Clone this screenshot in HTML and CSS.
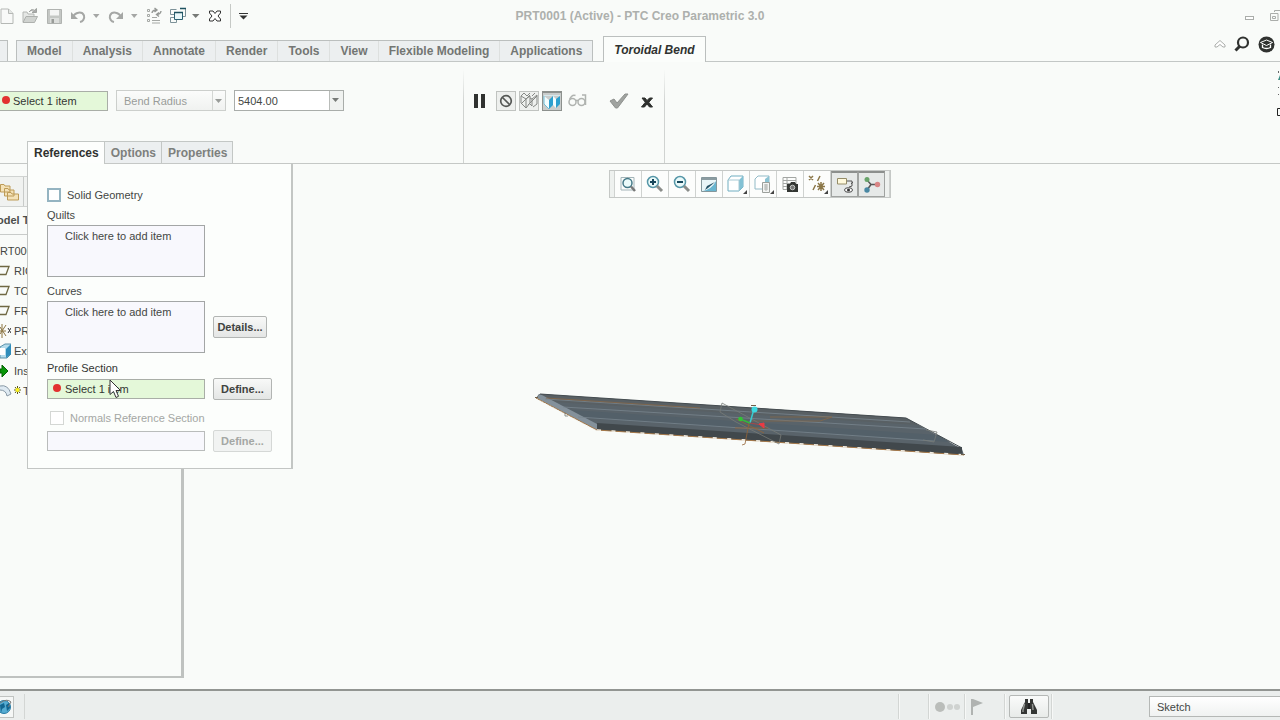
FILE: index.html
```html
<!DOCTYPE html>
<html lang="en">
<head>
<meta charset="utf-8">
<title>PRT0001 (Active) - PTC Creo Parametric 3.0</title>
<link rel="stylesheet" href="styles.css">
</head>
<body>
<header class="titlebar">
  <div class="quick">
    <button class="ico" aria-label="New"><svg width="14" height="18" viewBox="0 0 14 18"><path d="M1 2H8.500L13 6.500V16.500H1z" fill="#f8f9f8" stroke="#b5b8b5"/><path d="M8.500 2V6.500H13" fill="#e4e6e4" stroke="#b5b8b5"/></svg></button>
    <button class="ico" aria-label="Open"><svg width="16" height="18" viewBox="0 0 16 18"><path d="M1 15V5H5L6 7H12V9" fill="#e5e7e5" stroke="#b4b7b4"/><path d="M1 15.500L4 9.500H15.500L12.500 15.500z" fill="#d0d3d0" stroke="#aeb1ae"/><path d="M7 5Q9 1.500 12 3M10 5.500H14.500V1.500z" fill="#aaa" stroke="#a0a3a0"/></svg></button>
    <button class="ico" aria-label="Save"><svg width="16" height="18" viewBox="0 0 16 18"><path d="M1.500 2.500H15.500V16.500H1.500z" fill="#c4c7c4" stroke="#b0b3b0"/><path d="M4 3H13V8.500H4z" fill="#f4f5f4"/><path d="M4 11H13V16H4z" fill="#dcdedc"/><path d="M5.500 12H8V16H5.500z" fill="#999c99"/></svg></button>
    <span class="pair"><button class="ico" aria-label="Undo"><svg width="16" height="18" viewBox="0 0 16 18"><path d="M3 10C5 5 12 4 14 8.500C15 12 12.500 14.500 10 15" fill="none" stroke="#a5a7a5" stroke-width="2"/><path d="M1 5V12H8z" fill="#a5a7a5"/></svg></button><button class="ico" aria-label="Undo list"><svg width="8" height="6"><path d="M1 1H7.500L4.200 5z" fill="#a5a7a5"/></svg></button></span>
    <span class="pair"><button class="ico" aria-label="Redo"><svg width="16" height="18" viewBox="0 0 16 18"><path d="M13 10C11 5 4 4 2 8.500C1 12 3.500 14.500 6 15" fill="none" stroke="#a5a7a5" stroke-width="2"/><path d="M15 5V12H8z" fill="#a5a7a5"/></svg></button><button class="ico" aria-label="Redo list"><svg width="8" height="6"><path d="M1 1H7.500L4.200 5z" fill="#a5a7a5"/></svg></button></span>
    <button class="ico" aria-label="Regenerate"><svg width="16" height="18" viewBox="0 0 16 18" fill="none" stroke="#a5a8a5"><path d="M1.500 2.500h2v2h-2zM1.500 7.500h2v2h-2zM1.500 12.500h2v2h-2zM6 10.500H11M6 13.500H14M6 16H14"/><path d="M6 6Q6.500 3 10 3M8.500 1L11 3L8.500 5M15 4Q14.500 7.500 11 7.500M13 5.500L10.500 7.500L13 9.500" stroke="#959895" stroke-width="1.400"/></svg></button>
    <span class="pair"><button class="ico" aria-label="Windows"><svg width="16" height="18" viewBox="0 0 16 18" fill="none"><path d="M6.500 2.500H.500V7.500H4M4 10.500H.500V15.500H6.500V13M10 1.500H15.500V9.500H13" stroke="#7d9299"/><path d="M4.500 5.500H12.500V12.500H4.500z" stroke="#2b6070" fill="#e8f7f9"/><path d="M4 5.500H13M10 1.500H16" stroke="#1e5260" stroke-width="1.500"/></svg></button><button class="ico" aria-label="Windows list"><svg width="8" height="6"><path d="M0 1H7.500L3.700 5z" fill="#777a77"/></svg></button></span>
    <button class="ico" aria-label="Close window"><svg width="14" height="18" viewBox="0 0 14 18"><path d="M1.500 4H5L7 6.500L9 4H12.500V6L10 9L12.500 12V14H9L7 11.500L5 14H1.500V12L4 9L1.500 6z" fill="#fff" stroke="#333"/></svg></button>
    <span class="quick-sep"></span>
    <button class="ico" aria-label="Customize toolbar"><svg width="9" height="9"><path d="M0 1H9V2H0zM0.500 3.500H8.500L4.500 7.500z" fill="#333"/></svg></button>
  </div>
  <h1 class="title">PRT0001 (Active) - PTC Creo Parametric 3.0</h1>
  <div class="window-buttons">
    <button class="ico" aria-label="Minimize"><svg width="10" height="18"><rect x=".5" y="9.500" width="8" height="3" fill="#fff" stroke="#aaadaa"/></svg></button>
    <button class="ico" aria-label="Restore"><svg width="10" height="18" fill="none" stroke="#aaadaa"><path d="M4.500 5V3.500H10M.500 6.500H8V13.500H.500zM2.500 9.500H5.500V11.500H2.500z"/></svg></button>
  </div>
</header>

<nav class="tabs">
  <span class="file-tab"></span>
  <div class="tab-group">
    <button>Model</button><button>Analysis</button><button>Annotate</button><button>Render</button><button>Tools</button><button>View</button><button>Flexible Modeling</button><button>Applications</button>
  </div>
  <button class="active-tab">Toroidal Bend</button>
  <div class="help">
    <button class="ico" aria-label="Collapse ribbon"><svg width="12" height="9"><path d="M1 5L6 0.500L11 5V7H9L6 4.500L3 7H1z" fill="#fff" stroke="#aaadaa"/></svg></button>
    <button class="ico" aria-label="Search"><svg width="16" height="16" fill="none" stroke="#303230"><circle cx="9" cy="6.500" r="5" stroke-width="2.200"/><path d="M6 10L1.500 14.500" stroke-width="3"/></svg></button>
    <button class="ico" aria-label="Help"><svg width="17" height="17"><circle cx="8.500" cy="8.500" r="8" fill="#303230"/><path d="M2.500 6.500L8.500 4L14.500 6.500L8.500 9.500z" fill="#303230" stroke="#fff"/><path d="M4.500 8.500V11.500Q8.500 13.500 12.500 11.500V8.500" fill="none" stroke="#fff" stroke-width="1.300"/></svg></button>
  </div>
</nav>

<section class="ribbon">
  <div class="settings">
    <div class="controls">
      <label class="picker"><i class="dot"></i><input aria-label="Profile section" value="Select 1 item" readonly></label>
      <label class="drop bend"><select aria-label="Bend type" disabled><option>Bend Radius</option></select><svg class="caret" width="8" height="5"><path d="M0 0H7L3.500 4z" fill="#999c99"/></svg></label>
      <div class="combo"><input aria-label="Radius" value="5404.00"><button aria-label="Recent values"><svg width="8" height="5"><path d="M0 0H7L3.500 4z" fill="#777a77"/></svg></button></div>
    </div>
    <div class="subtabs">
      <button class="current">References</button><button>Options</button><button>Properties</button>
      <form class="panel">
        <label class="check"><input type="checkbox"> Solid Geometry</label>
        <div class="field"><label for="quilts">Quilts</label><div class="line"><textarea id="quilts" readonly>Click here to add item</textarea></div></div>
        <div class="field"><label for="curves">Curves</label><div class="line"><textarea id="curves" readonly>Click here to add item</textarea><button type="button" class="push details">Details...</button></div></div>
        <div class="field profile"><label for="profile">Profile Section</label><div class="line"><span class="picker"><i class="dot"></i><input id="profile" value="Select 1 item" readonly></span><button type="button" class="push">Define...</button></div></div>
        <label class="check normals"><input type="checkbox" disabled> Normals Reference Section</label>
        <div class="line"><input class="blank" aria-label="Normals reference" disabled><button type="button" class="push" disabled>Define...</button></div>
        <svg class="pointer" width="14" height="21"><path d="M1 1V15.500L4.500 12.500L7 18.500L9.500 17.300L7 11.500H11.500z" fill="#fff" stroke="#333"/></svg>
      </form>
    </div>
  </div>
  <div class="actions">
    <button class="ico" aria-label="Pause"><svg width="14" height="20"><path d="M1 3H5V17H1zM8 3H12V17H8z" fill="#303230"/></svg></button>
    <div class="modes">
      <button class="mode" aria-label="No preview"><svg width="18" height="18" fill="none" stroke="#555855" stroke-width="1.700"><circle cx="9" cy="9" r="5.300"/><path d="M5.500 5.500L12.500 12.500"/></svg></button>
      <button class="mode" aria-label="Unattached preview"><svg width="18" height="18" fill="none" stroke="#858885"><path d="M1 4L6 7V16L1 11zM6 7L10 4V11L6 16M10 6L12 7V14L10 12M12 7L17 3V12L13 15M1 4L4 1L7 4L10 1M12 4L15 1M1 12L10 3M8 13L17 4"/></svg></button>
      <button class="mode on" aria-label="Attached preview"><svg width="18" height="17"><path d="M1 3L6 7V16L1 11zM10 3L13 6V15L10 12z" fill="#f2fdff"/><path d="M6 7L10 3V12L6 16zM13 6L17 3V11L13 15z" fill="#2c9fce"/><path d="M1 2.500H17" stroke="#d5e8ed"/><path d="M1 3V11L6 16" fill="none" stroke="#6dbdd6"/></svg></button>
      <button class="ico" aria-label="Verify"><svg width="20" height="18" fill="none" stroke="#b0b3b0" stroke-width="1.500"><circle cx="4.500" cy="10" r="3.500"/><circle cx="13.500" cy="10" r="3.500"/><path d="M8 9Q9 7.500 10 9M1.500 7.500Q4 2 7.500 3.500M17.500 13V3H14"/></svg></button>
    </div>
    <div class="finish">
      <button class="ico" aria-label="Accept"><svg width="20" height="20"><path d="M1 10L5 8L8 12L16 3H19L8.500 17H6.500z" fill="#a0a3a0" stroke="#8e918e"/></svg></button>
      <button class="ico" aria-label="Cancel"><svg width="12" height="20"><path d="M1 7H4L6 9.500L8.500 7H11.500L7.800 11.300L11.500 16H8.500L6 13L3.500 16H.500L4.300 11.300z" fill="#2e302e" stroke="#2e302e"/></svg></button>
    </div>
  </div>
  <div class="overflow"><svg width="5" height="42"><path d="M3 1h1v2h-1zM3 17h1v1h-1zM3 24h1v1h-1z" fill="#666"/><path d="M3 10L5 5V10z" fill="#3c8e85"/></svg><svg width="5" height="10"><path d="M5 1.500H2.500V8.500H5" fill="none" stroke="#222"/></svg></div>
</section>

<main class="workspace">
  <aside class="tree">
    <div class="tree-tabs"><button aria-label="Folders"><svg width="20" height="20" fill="#f4e2b8" stroke="#bd9b57"><path d="M.500 2.500H4L5 4H10V10H.500zM4.500 6.500H8L9 8H14V14H4.500zM7.500 10.500H11L12 12H18.500V18H7.500z"/></svg></button></div>
    <h2>odel T</h2>
    <ul>
      <li class="root">RT000</li>
      <li><svg width="10" height="14"><path d="M0 2.500H9L6 10.500H0" fill="none" stroke="#6f6843" stroke-width="1.300"/></svg>RIG</li>
      <li><svg width="10" height="14"><path d="M0 2.500H9L6 10.500H0" fill="none" stroke="#6f6843" stroke-width="1.300"/></svg>TO</li>
      <li><svg width="10" height="14"><path d="M0 2.500H9L6 10.500H0" fill="none" stroke="#6f6843" stroke-width="1.300"/></svg>FR</li>
      <li><svg width="12" height="16"><path d="M2 1V15M0 8H6M0 4L6 13M6 2L0 11" stroke="#8a7441" fill="none"/><path d="M8 5L11 10M11 5L8 10" stroke="#333"/></svg>PR</li>
      <li><svg width="12" height="16"><path d="M0 4L5 1H11V11L7 15H0z" fill="#b4dcec" stroke="#5a91aa"/><path d="M6 6L11 1V11L6 15z" fill="#2f8dbb"/><path d="M0 5H5V12H0z" fill="#fff"/></svg>Ext</li>
      <li><svg width="12" height="14"><path d="M0 5H2V1L8 7L2 13V9H0z" fill="#079607" stroke="#056205"/></svg>Ins</li>
      <li><svg width="23" height="16"><path d="M0 3Q8 1 11 11L7 13Q6 7 0 7" fill="#dfeaf2" stroke="#8898a5"/><path d="M14 7H21M17.500 3V11M15 4L20 10M20 4L15 10" stroke="#5e5b16"/><circle cx="17.500" cy="7" r="2" fill="#fbf31b"/></svg>T</li>
    </ul>
  </aside>
  <section class="canvas">
    <div class="view-tools">
      <span class="grip"></span>
      <button aria-label="Refit"><svg width="20" height="20" fill="none"><path d="M3 3.500H16V16H3z" stroke="#a3b4b8"/><circle cx="9.500" cy="9" r="4.500" fill="#eafafa" stroke="#447987" stroke-width="1.500"/><path d="M13 12.500L17 17" stroke="#777" stroke-width="2.500"/></svg></button>
      <button aria-label="Zoom in"><svg width="20" height="20" fill="none"><circle cx="8" cy="8" r="5.500" fill="#eafafa" stroke="#5697a8" stroke-width="1.500"/><path d="M5 8H11M8 5V11" stroke="#17475c" stroke-width="2"/><path d="M12 12L17 17" stroke="#8a8d8a" stroke-width="3"/></svg></button>
      <button aria-label="Zoom out"><svg width="20" height="20" fill="none"><circle cx="8" cy="8" r="5.500" fill="#eafafa" stroke="#5697a8" stroke-width="1.500"/><path d="M5 8H11" stroke="#17475c" stroke-width="2"/><path d="M12 12L17 17" stroke="#8a8d8a" stroke-width="3"/></svg></button>
      <button aria-label="Repaint"><svg width="20" height="20"><path d="M2.500 3.500H17.500V17.500H2.500z" fill="#e9f5f8" stroke="#85979c"/><path d="M3 6H17V4H3z" fill="#8b9ca1"/><path d="M17 7V17H4Q13 15 17 7z" fill="#68b5d0"/><path d="M16 8L9 14L6 16L8 12z" fill="#235064"/></svg></button>
      <button aria-label="Display style"><svg width="20" height="20"><path d="M2 6L5 2H17V13L13 17H2z" fill="#fff" stroke="#71aec1"/><path d="M13 6L17 2V13L13 17z" fill="#82c1d4"/><path d="M2 6H13V17" fill="none" stroke="#a8cad4"/></svg><i class="more"></i></button>
      <button aria-label="Saved orientations"><svg width="20" height="20"><path d="M2 5L5 2H16V12L13 15H2z" fill="#fff" stroke="#91bac7"/><path d="M12 5L16 2V12L12 15z" fill="#8cc4d4"/><path d="M9.500 8.500H16.500V18.500H9.500z" fill="#f4f5f4" stroke="#9ca09c"/><path d="M11 11H15M11 13H15M11 15H15M13 10V17" stroke="#b0b3b0"/></svg><i class="more"></i></button>
      <button aria-label="View manager"><svg width="20" height="20" fill="none"><path d="M3 3.500H16V15.500H3zM3 6.500H16M3 9.500H16M3 12.500H10M7 3V15" stroke="#a3a6a3"/><path d="M7 10H10L11 8H15L16 10H18V18H7z" fill="#333633"/><circle cx="12.500" cy="13.500" r="2.300" fill="#777" stroke="#c5c8c5"/></svg></button>
      <button aria-label="Datum display"><svg width="20" height="20" fill="none" stroke="#8b7748" stroke-width="1.500"><path d="M2 2L6 6M6 2L2 6M13 2L10.500 7M8.500 11L6 16M14 8V17M10 12.500H18M11 9L17 16M17 9L11 16"/></svg><i class="more"></i></button>
      <button class="on" aria-label="Annotation display"><svg width="20" height="20" fill="none"><path d="M2.500 3.500H11.500V9H2.500z" fill="#fff9dc" stroke="#948c68"/><path d="M12 6H17V11L14 12M16 9L18 7" stroke="#555"/><ellipse cx="13.500" cy="15" rx="4" ry="2.300" fill="#fff" stroke="#444"/><circle cx="13.500" cy="15" r="1.500" fill="#333"/></svg></button>
      <button class="on" aria-label="Spin center"><svg width="20" height="20"><path d="M5 5L9 9.500H15M9 9.500L5 15" fill="none" stroke="#555" stroke-width="1.500"/><circle cx="5" cy="4.500" r="2.500" fill="#68a46a"/><circle cx="15.500" cy="9.500" r="2.700" fill="#d88585"/><circle cx="5" cy="15" r="2.700" fill="#4988a3"/></svg></button>
      <span class="grip"></span>
    </div>
    <svg class="part" width="440" height="76" viewBox="530 385 440 76" role="img" aria-label="Flat plate">
      <path d="M539 394L906 418L962 449L964 455L597 430L536 398z" fill="#59636a"/>
      <path d="M539 394L906 418L918 425L553 402z" fill="#596064"/>
      <path d="M572 410L938 435L950 442L585 418z" fill="#536069"/>
      <path d="M536 398L540 394L597 424V430z" fill="#84919b"/>
      <path d="M597 423L962 447V455L597 430z" fill="#41484c"/>
      <path d="M540 394L906 418L962 448" fill="none" stroke="#454c50"/>
      <path d="M545 399L910 422M563 407L926 429M578 417L934 441" fill="none" stroke="#78858e" stroke-width=".8"/>
      <path d="M546 398L700 408M770 417H832L820 421H750" fill="none" stroke="#866748" stroke-width=".8"/>
      <path d="M536 398L597 430L964 455" fill="none" stroke="#a87a4a"/>
      <path d="M537 399L597 431" fill="none" stroke="#e8e8e0" stroke-dasharray="1 2"/>
      <path d="M597 430L964 455" fill="none" stroke="#f0ece2" stroke-width="1.600" stroke-dasharray="4 10.500"/>
      <path d="M720 412L722 403L781 435L779 444L736 422zM926 430L937 432L934 442L923 440M565 412V416H568" fill="none" stroke="#777b77" stroke-width=".8"/>
      <path d="M736 419L764 433M735 428H768M749 423L745 444L742 445" fill="none" stroke="#946437" stroke-width=".8"/>
      <path d="M750 423L754 409" stroke="#37cbd1" stroke-width="1.500"/><path d="M750 423L740 419" stroke="#35b83b" stroke-width="1.500"/><path d="M750 423L762 425" stroke="#a94747"/>
      <circle cx="754.500" cy="409.500" r="3" fill="#3dd8e0"/><circle cx="740.500" cy="419" r="2.300" fill="#32c236"/><path d="M759 424L764 423V428z" fill="#eb3a43" stroke="#eb3a43"/><path d="M751 405.500H756M535 397.500H538M961 454.500H965" stroke="#6f5e48"/>
    </svg>
  </section>
</main>

<footer class="status">
  <button class="globe" aria-label="Browser"><svg width="12" height="18"><circle cx="4" cy="9" r="6.500" fill="#56acd2" stroke="#277aa3"/><path d="M0 7L4 5L5 9L2 11L1 15M6 7L9 5L10 10L7 13z" fill="#126590"/><path d="M0 5Q7 0 11 4L8 9" fill="none" stroke="#777"/></svg></button>
  <span class="cell message"></span>
  <span class="cell slot"></span>
  <span class="cell dots"><svg width="28" height="14"><circle cx="6" cy="7" r="5" fill="#babdba"/><circle cx="16" cy="7" r="3" fill="#cfd2d0"/><circle cx="23" cy="7" r="3" fill="#cfd2d0"/></svg></span>
  <span class="cell flag"><svg width="14" height="18"><path d="M1 1H3V17H1zM3 1L13 5L3 9z" fill="#b0b3b1"/></svg></span>
  <button class="find" aria-label="Find"><svg width="18" height="17"><path d="M5 1H8V5H10V1H13V4L17 12V16H11V11H7V16H1V12L5 4z" fill="#343634"/><path d="M8 5H10V11H8z" fill="#222"/><path d="M4.500 6L3 12V14M12.500 6L13 12" stroke="#8e918e" stroke-width="1.500"/></svg></button>
  <span class="cell rest"></span>
  <select class="filter" aria-label="Selection filter"><option>Sketch</option></select>
</footer>
</body>
</html>
```
FILE: styles.css
```css
* { box-sizing: border-box; }
body {
  margin: 0;
  min-height: 100vh;
  display: flex;
  flex-direction: column;
  overflow: hidden;
  background: #f9fbf9;
  color: #444744;
  font: 11px/16px "Liberation Sans", Arial, sans-serif;
}
button, input, select, textarea { font: inherit; color: inherit; margin: 0; }
button { padding: 0; border: 0; background: none; }
svg { display: block; flex: none; }

.ico { display: flex; align-items: center; justify-content: center; }

/* Title bar */
.titlebar { display: grid; grid-template-columns: 1fr auto 1fr; align-items: center; height: 32px; }
.quick { display: flex; align-items: center; gap: 8px; }
.pair { display: flex; align-items: center; gap: 6px; }
.quick-sep { width: 1px; height: 24px; background: #c6c9c6; }
.title { margin: 0; font-size: 12px; font-weight: bold; color: #adb0ad; }
.window-buttons { display: flex; justify-content: flex-end; gap: 15px; }

/* Ribbon tabs */
.tabs { display: flex; align-items: flex-end; height: 30px; padding-top: 4px; border-bottom: 1px solid #c3c7c6; font-size: 12px; }
.tabs button { font-weight: bold; }
.file-tab { width: 8px; height: 21px; background: #eceff0; border: 1px solid #bbbfbe; border-width: 1px 1px 0 0; }
.tab-group { display: flex; height: 21px; margin: 0 10px 0 8px; background: #eceff0; border: 1px solid #bbbfbe; border-bottom: 0; }
.tab-group button { padding: 0 10px; color: #737673; border-right: 1px solid #dde0df; }
.tab-group button:last-child { border-right: 0; }
.active-tab { height: 26px; margin-bottom: -1px; padding: 0 10px; border: 1px solid #bbbfbe; border-bottom: 0; background: #fbfdfb; color: #303230; font-style: italic; }
.help { display: flex; align-items: center; gap: 8px; height: 34px; margin-left: auto; padding-right: 5px; }

/* Ribbon */
.ribbon { display: flex; height: 102px; border-bottom: 1px solid #c5c8c6; }
.settings { width: 464px; display: flex; flex-direction: column; justify-content: space-between; }
.settings, .actions { border-right: 1px solid; border-image: linear-gradient(#f9fbf9 8%, #d0d3d1 40%) 1; }
.controls { display: flex; align-items: center; gap: 8px; padding-top: 28px; }
.picker { position: relative; display: flex; }
.picker input { width: 100%; height: 20px; padding: 0 0 0 17px; border: 1px solid #a9aea7; background: #e4f8d9; color: #333633; }
.dot { position: absolute; left: 6px; top: 5px; width: 8px; height: 8px; border-radius: 50%; background: #e2322f; }
.controls .picker { width: 108px; }
.controls .picker input { border-left: 0; padding-left: 13px; }
.controls .dot { left: 2px; }
.drop { position: relative; }
.drop select { appearance: none; width: 110px; height: 21px; padding: 0 7px; border: 1px solid #cccfcc; border-radius: 0; background: linear-gradient(#fbfcfb, #f0f2f0); color: #999c99; opacity: 1; }
.caret { position: absolute; right: 3px; top: 9px; }
.drop::after { content: ""; position: absolute; right: 13px; top: 1px; bottom: 1px; width: 1px; background: #d4d7d4; }
.combo { display: flex; width: 110px; height: 21px; border: 1px solid #a9adaa; background: #fff; }
.combo input { flex: 1; min-width: 0; padding: 0 3px; border: 0; background: none; }
.combo button { width: 14px; padding-left: 2px; border-left: 1px solid #b9bcb9; background: #f0f2f0; }

.actions { display: flex; align-items: flex-start; width: 201px; padding: 29px 0 0 9px; }
.modes { display: flex; gap: 3px; margin-left: 9px; }
.mode { width: 20px; height: 20px; border: 1px solid #c0c3c0; background: #eef0ee; }
.mode.on { border: 1px solid #8c908d; border-top-width: 2px; background: #c9cccb; }
.finish { display: flex; gap: 12px; margin-left: 21px; }
.modes .ico { margin-left: 3px; }
.overflow { margin-left: auto; padding-top: 8px; width: 5px; display: flex; flex-direction: column; }
.overflow svg:first-child { height: 37px; }

/* Dashboard sub-tabs and slide-down panel */
.subtabs { position: relative; display: flex; align-self: flex-start; height: 22px; margin-left: 27px; }
.subtabs > button { padding: 0 5px 0 6px; font-size: 12px; font-weight: bold; color: #7d807d; background: #eceff0; border: 1px solid #c3c7c5; border-left-width: 0; border-bottom: 0; }
.subtabs > .current { color: #303230; background: #fdfefd; border-left-width: 1px; }
.panel { position: absolute; z-index: 2; left: 0; top: 22px; width: 266px; margin: 0; padding: 20px 19px 16px; display: flex; flex-direction: column; background: #fcfefc; border: 1px solid #c3c6c4; border-width: 0 2px 1px 1px; }
.panel::before { content: ""; position: absolute; left: 76px; right: 0; top: 0; height: 1px; background: #c5c8c6; }
.check { display: flex; align-items: center; gap: 6px; height: 22px; }
.check:first-child { height: 24px; }
.check input { appearance: none; width: 14px; height: 14px; border: 2px solid #94b4c1; background: #fff; }
.check.normals { margin: 7px 0 1px 3px; color: #a4a7a4; }
.check.normals input { border: 1px solid #d4d7d4; }
.field { display: flex; flex-direction: column; margin-bottom: 6px; }
.field > label { height: 18px; }
.profile { margin: 1px 0 0; }
.profile > label { height: 18px; color: #333633; }
.line { display: flex; align-items: center; gap: 8px; }
.line .picker, .line textarea, .blank { flex: none; width: 158px; }
.line textarea { height: 52px; padding: 2px 17px; resize: none; overflow: hidden; border: 1px solid #a3a6a6; background: #f8f8fd; }
.blank { height: 20px; border: 1px solid #b9bcbb; background: #f8f8fd; }
.push { width: 59px; height: 22px; border: 1px solid #b2b5b3; border-radius: 2px; background: linear-gradient(#f8f9f8, #e4e6e5); font-weight: bold; color: #404340; }
.push.details { width: 54px; }
.push:disabled { border-color: #d5d8d6; background: #f1f3f2; color: #a4a7a4; }
.pointer { position: absolute; left: 81px; top: 216px; }

/* Workspace */
.workspace { flex: 1; display: flex; }
.tree { width: 184px; margin-bottom: 11px; padding-top: 12px; border: 0 solid #bfc2c0; border-width: 0 3px 2px 0; overflow: hidden; }
.tree-tabs { display: flex; height: 31px; background: #f0f2f0; border: 1px solid #d0d3d1; border-left: 0; }
.tree-tabs button { width: 24px; border-right: 1px solid #c8cbc9; }
.tree h2 { margin: 0; padding: 5px 0; font-size: 11px; font-weight: bold; line-height: 17px; text-indent: -3px; border-bottom: 1px solid #c8cbc9; color: #4c4f4c; }
.tree ul { list-style: none; margin: 0; padding: 6px 0 0; }
.tree li { display: flex; align-items: center; height: 20px; }
.tree li svg { margin-right: 3px; }
.tree li svg:not([width="23"]) { width: 11px; }
.tree li:last-child svg { margin-right: 0; }
.canvas { flex: 1; min-width: 0; display: flex; flex-direction: column; align-items: center; gap: 187px; padding: 6px 0 0 36px; }
.view-tools { display: flex; height: 28px; border: 1px solid #c5c8c6; background: #fcfdfc; }
.view-tools button { position: relative; display: flex; align-items: center; justify-content: center; width: 27px; border-right: 1px solid #cfd2d0; }
.view-tools .on { border: 1px solid #a0a3a1; border-top: 2px solid #8c8f8d; background: #e6e9e8; }
.grip { width: 5px; background: #eef1ef; border-right: 1px solid #cfd2d0; }
.more { position: absolute; right: 2px; bottom: 3px; border: 2px solid; border-color: transparent #444 #444 transparent; }

/* Status bar */
.status { display: flex; align-items: center; height: 31px; padding-top: 2px; border-top: 2px solid #929592; background: #ebeeed; }
.globe { width: 14px; height: 22px; background: #f5f7f6; border: 1px solid #c0c3c1; border-left: 0; }
.cell { display: flex; align-items: center; height: 25px; border-right: 1px solid #d3d6d4; box-shadow: 1px 0 #f7f8f7; }
.message { flex: 1; }
.message::before { content: ""; width: 1px; height: 25px; margin-left: 10px; background: #d3d6d4; }
.slot { width: 30px; }
.dots { width: 36px; padding-left: 5px; }
.flag { width: 40px; padding-left: 5px; }
.find { display: flex; align-items: center; justify-content: center; width: 40px; height: 23px; margin: 0 2px 0 4px; border: 1px solid #b5b8b6; border-radius: 2px; background: linear-gradient(#fafbfa, #e8ebe9); }
.rest { width: 1px; }
.filter { appearance: none; width: 131px; height: 21px; margin-left: 97px; padding: 0 7px; border: 1px solid #b5b8b6; border-right: 0; border-radius: 0; background: linear-gradient(#fff, #f0f2f1); }
```
